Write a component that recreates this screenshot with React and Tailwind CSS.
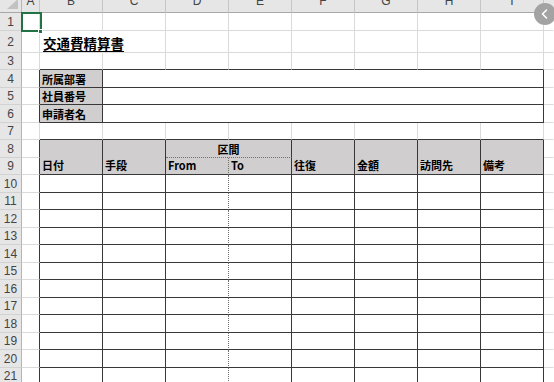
import React from 'react';

const COLS = ['A', 'B', 'C', 'D', 'E', 'F', 'G', 'H', 'I'];

const R = {
  light: 'border-r-[#dadada]',
  dark: 'border-r-[#383838]',
  dotted: 'border-r-[#707070] [border-right-style:dotted]',
  white: 'border-r-white',
};
const B = {
  light: 'border-b-[#dadada]',
  dark: 'border-b-[#383838]',
  dotted: 'border-b-[#707070] [border-bottom-style:dotted]',
};

const JP = "font-['Noto_Sans_CJK_JP',sans-serif]";

function Cell({ r = 'light', b = 'light', className = '', children }) {
  return <div className={`border-r border-b ${R[r]} ${B[b]} ${className}`}>{children}</div>;
}

function Label({ children }) {
  return <span className={`${JP} font-bold text-[11px] leading-none text-black whitespace-nowrap`}>{children}</span>;
}

export default function App() {
  const cells = [];

  // column header row
  cells.push(
    <div key="corner" className="bg-[#e6e6e6] border-r border-b border-r-[#b5b5b5] border-b-[#a8a8a8] flex items-end justify-end pr-[3px] pb-[3px]">
      <svg width="11" height="10" viewBox="0 0 11 10">
        <polygon points="11,0 11,10 0,10" fill="#c2c2c2" />
      </svg>
    </div>
  );
  COLS.forEach((c) =>
    cells.push(
      <div key={'h' + c} className="bg-[#e6e6e6] border-r border-b border-r-[#c6c6c6] border-b-[#a8a8a8] flex justify-center overflow-hidden">
        <span className="text-[12px] leading-[12px] -mt-[5px] text-[#444] font-['Liberation_Sans',sans-serif]">{c}</span>
      </div>
    )
  );
  cells.push(<div key="hJ" className="bg-[#e6e6e6] border-b border-b-[#a8a8a8]" />);

  for (let r = 1; r <= 21; r++) {
    const tableRow = (r >= 4 && r <= 6) || r >= 8;
    cells.push(
      <div key={'rh' + r} className="bg-[#e6e6e6] border-r border-b border-r-[#b5b5b5] border-b-[#d2d2d2] flex items-center justify-center text-[12px] leading-none text-[#444] font-['Liberation_Sans',sans-serif]">
        {r}
      </div>
    );
    // column A
    cells.push(
      <Cell key={'A' + r} r={tableRow ? 'dark' : 'light'} className={r === 1 ? 'relative' : ''}>
        {r === 1 && (
          <>
            <div className="absolute -left-[1px] -top-[1px] w-[21px] h-[20px] border-2 border-[#217346] z-10" />
            <div className="absolute left-[16px] top-[16px] w-[5px] h-[5px] bg-[#217346] border border-white z-20" />
          </>
        )}
      </Cell>
    );

    if (r === 1 || r === 3 || r === 7) {
      for (let i = 1; i < 9; i++) {
        cells.push(<Cell key={r + '-' + i} b={r === 1 ? 'light' : 'dark'} />);
      }
    } else if (r === 2) {
      cells.push(
        <Cell key="B2" r="white" className="flex items-end pl-[3px] pb-[2px] overflow-visible">
          <span className={`${JP} font-bold text-[13.5px] leading-none text-black underline underline-offset-[2px] whitespace-nowrap`}>
            交通費精算書
          </span>
        </Cell>
      );
      for (let i = 2; i < 9; i++) cells.push(<Cell key={'2-' + i} />);
    } else if (r >= 4 && r <= 6) {
      const label = { 4: '所属部署', 5: '社員番号', 6: '申請者名' }[r];
      cells.push(
        <Cell key={'B' + r} r="dark" b="dark" className="bg-[#d0cece] flex items-end pl-[2px] pb-[2px]">
          <Label>{label}</Label>
        </Cell>
      );
      cells.push(<Cell key={'C' + r} r="dark" b="dark" className="col-span-7 bg-white" />);
    } else if (r === 8) {
      const hd = 'bg-[#d0cece] flex items-end pl-[2px] pb-[3px]';
      cells.push(<Cell key="B8" r="dark" b="dark" className={`row-span-2 ${hd}`}><Label>日付</Label></Cell>);
      cells.push(<Cell key="C8" r="dark" b="dark" className={`row-span-2 ${hd}`}><Label>手段</Label></Cell>);
      cells.push(
        <Cell key="D8" r="dark" b="dotted" className="col-span-2 bg-[#d0cece] flex items-end justify-center pb-[2px]">
          <Label>区間</Label>
        </Cell>
      );
      cells.push(<Cell key="F8" r="dark" b="dark" className={`row-span-2 ${hd}`}><Label>往復</Label></Cell>);
      cells.push(<Cell key="G8" r="dark" b="dark" className={`row-span-2 ${hd}`}><Label>金額</Label></Cell>);
      cells.push(<Cell key="H8" r="dark" b="dark" className={`row-span-2 ${hd}`}><Label>訪問先</Label></Cell>);
      cells.push(<Cell key="I8" r="dark" b="dark" className={`row-span-2 ${hd}`}><Label>備考</Label></Cell>);
    } else if (r === 9) {
      cells.push(
        <Cell key="D9" r="dotted" b="dark" className="bg-[#d0cece] flex items-end pl-[2px] pb-[3px]">
          <Label>From</Label>
        </Cell>
      );
      cells.push(
        <Cell key="E9" r="dark" b="dark" className="bg-[#d0cece] flex items-end pl-[2px] pb-[3px]">
          <Label>To</Label>
        </Cell>
      );
    } else {
      for (let i = 1; i < 9; i++) {
        cells.push(<Cell key={r + '-' + i} r={i === 3 ? 'dotted' : 'dark'} b="dark" />);
      }
    }
    // column J (partial)
    cells.push(<Cell key={'J' + r} r="white" />);
  }

  return (
    <div className="relative w-[554px] h-[382px] overflow-hidden bg-white">
      <div className="grid grid-cols-[22px_18px_63px_63px_63px_63px_63px_63px_63px_63px_1fr] grid-rows-[13px_18px_22px_17px_18px_17px_18px_17px_18px_17px_18px_17px_18px_17px_18px_17px_18px_17px_18px_17px_18px_17px]">
        {cells}
      </div>
      <div className="absolute left-[534px] top-[3px] w-[22px] h-[22px] rounded-full bg-[#a3a3a3] flex items-center justify-center z-30">
        <svg width="22" height="22" viewBox="0 0 22 22">
          <polyline points="12.5,7 8.5,11 12.5,15" fill="none" stroke="white" strokeWidth="1.6" strokeLinecap="round" strokeLinejoin="round" />
        </svg>
      </div>
    </div>
  );
}
